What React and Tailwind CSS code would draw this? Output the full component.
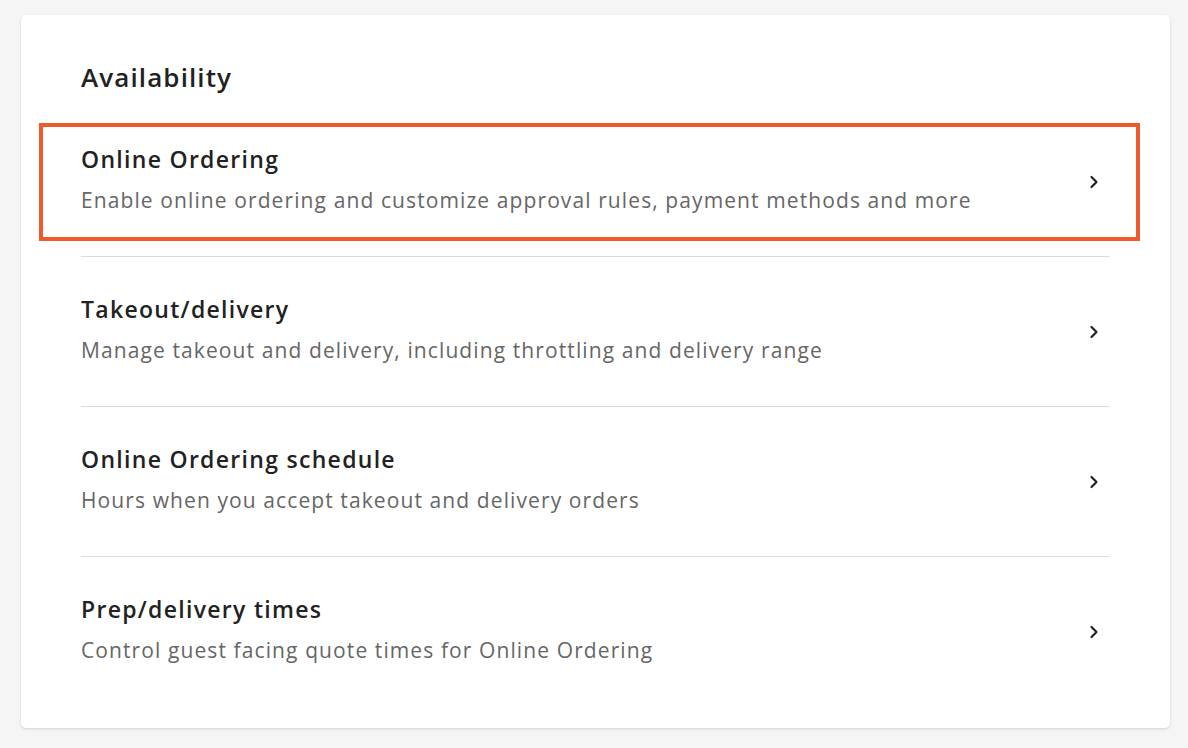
import { ChevronRight } from "lucide-react";

const rows = [
  {
    title: "Online Ordering",
    desc: "Enable online ordering and customize approval rules, payment methods and more",
    highlight: true,
  },
  {
    title: "Takeout/delivery",
    desc: "Manage takeout and delivery, including throttling and delivery range",
  },
  {
    title: "Online Ordering schedule",
    desc: "Hours when you accept takeout and delivery orders",
  },
  {
    title: "Prep/delivery times",
    desc: "Control guest facing quote times for Online Ordering",
  },
];

const App = () => {
  return (
    <div
      className="min-h-screen bg-[#f5f5f5] pt-[15px] pl-[21px] pr-[18px]"
      style={{ fontFamily: "'Open Sans', Lato, sans-serif" }}
    >
      <div className="bg-white rounded-[5px] shadow-[0_1px_3px_rgba(0,0,0,0.15)] w-[1149px] h-[713px] px-[60px] pt-[44px]">
        <h2 className="text-[26px] leading-[36px] font-semibold text-[#222] tracking-[1.1px]">
          Availability
        </h2>
        <div className="mt-[12px]">
          {rows.map((row, i) => (
            <div
              key={i}
              className={`relative flex items-center justify-between h-[150px] ${
                i < rows.length - 1 ? "border-b border-[#dcdcdc]" : ""
              }`}
            >
              {row.highlight && (
                <div className="absolute left-[-42px] right-[-30px] top-[16px] bottom-[15px] border-[4px] border-[#ee5a2a] pointer-events-none" />
              )}
              <div className="flex flex-col gap-[12px] pb-[6px]">
                <p className="text-[23px] leading-[30px] font-semibold text-[#222] tracking-[1.3px]">
                  {row.title}
                </p>
                <p className="text-[21px] leading-[28px] text-[#666] tracking-[1.1px]">
                  {row.desc}
                </p>
              </div>
              <ChevronRight
                className="mr-[6px] text-[#222]"
                size={20}
                strokeWidth={2.6}
              />
            </div>
          ))}
        </div>
      </div>
    </div>
  );
};

export default App;
